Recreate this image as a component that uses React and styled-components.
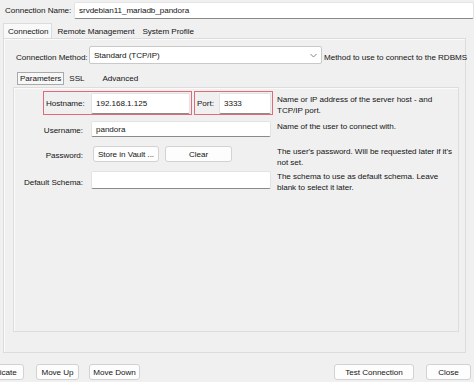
import React from "react";
import styled, { createGlobalStyle } from "styled-components";

const Global = createGlobalStyle`
  html, body {
    margin: 0;
    padding: 0;
    background: #f0f0f0;
  }
  * {
    box-sizing: border-box;
  }
`;

const Window = styled.div`
  width: 474px;
  height: 382px;
  overflow: hidden;
  background: #f0f0f0;
  color: #141414;
  font-family: "Liberation Sans", Arial, sans-serif;
  font-size: 8.1px;
  letter-spacing: -0.05px;
  display: flex;
  flex-direction: column;
`;

const NameRow = styled.div`
  display: flex;
  align-items: center;
  height: 18px;
  margin-top: 1px;
  padding-left: 5px;
`;

const NameLabel = styled.span`
  width: 69px;
  flex: none;
  white-space: nowrap;
`;

const TextInput = styled.div`
  background: #ffffff;
  height: ${({ $h }) => $h || 16}px;
  width: ${({ $w }) => ($w ? `${$w}px` : "auto")};
  flex: ${({ $grow }) => ($grow ? 1 : "none")};
  border: 1px solid #e3e3e3;
  border-bottom-color: #8a8a8a;
  border-radius: 2px;
  padding: 0 4px;
  display: flex;
  align-items: center;
  white-space: nowrap;
`;

const Tabs = styled.div`
  display: flex;
  margin: 4px 0 0 3px;
  height: 15px;
`;

const Tab = styled.div`
  padding: 0 3px 0 ${({ $active }) => ($active ? 4 : 2)}px;
  display: flex;
  align-items: center;
  white-space: nowrap;
  margin-right: ${({ $active }) => ($active ? 2 : 1)}px;
  background: ${({ $active }) => ($active ? "#f9f9f9" : "transparent")};
  border: 1px solid ${({ $active }) => ($active ? "#dcdcdc" : "transparent")};
  border-bottom: none;
`;

const Pane = styled.div`
  margin: 0 8px 0 3px;
  height: 315px;
  border: 1px solid #dcdcdc;
  box-shadow: inset 1px 1px 0 #fafafa;
  padding: 7px 6px 0 9px;
  display: flex;
  flex-direction: column;
`;

const MethodRow = styled.div`
  display: flex;
  align-items: center;
  height: 18px;
  padding-left: 3px;
`;

const MethodLabel = styled.span`
  width: 73px;
  flex: none;
  padding-top: 5px;
  white-space: nowrap;
`;

const Combo = styled.div`
  width: 233px;
  flex: none;
  height: 18px;
  background: #ffffff;
  border: 1px solid #c9c9c9;
  border-radius: 2px;
  padding: 0 4px;
  display: flex;
  align-items: center;
  justify-content: space-between;
`;

const Hint = styled.span`
  line-height: 11px;
  flex: none;
  white-space: nowrap;
  margin-left: 2px;
  padding-top: ${({ $top }) => $top || 0}px;
`;

const SubTabs = styled.div`
  display: flex;
  margin: 8px 0 0 4px;
  height: 13px;
`;

const SubTab = styled.div`
  padding: 0 2px;
  margin-right: ${({ $gap }) => $gap || 0}px;
  display: flex;
  align-items: center;
  border: 1px solid ${({ $active }) => ($active ? "#a9a9a9" : "transparent")};
  background: ${({ $active }) => ($active ? "#f7f7f7" : "transparent")};
`;

const InnerPane = styled.div`
  margin: 2px 0 20px 0;
  flex: 1;
  border: 1px solid #dddddd;
  box-shadow: inset 1px 1px 0 #fafafa;
  padding: 3px 0 0 1px;
  display: grid;
  grid-template-columns: 68px 180px 1fr;
  grid-template-rows: 24px 19px 19px 22px;
  column-gap: 8px;
  row-gap: 6px;
  align-content: start;
`;

const Label = styled.span`
  text-align: right;
  align-self: center;
  white-space: nowrap;
`;

const Field = styled.div`
  display: flex;
  align-items: flex-start;
  gap: 6px;
`;

const Desc = styled.span`
  line-height: 11px;
  padding-top: ${({ $top }) => $top || 0}px;
  margin-left: -2px;
  align-self: start;
  white-space: nowrap;
`;

const HostCell = styled.div`
  grid-column: 1 / 3;
  display: flex;
  justify-content: flex-end;
  gap: 2px;
  margin-right: -2px;
`;

const RedBox = styled.div`
  width: ${({ $w }) => $w}px;
  border: 1px solid #e06a7a;
  display: flex;
  align-items: center;
  padding: 0 1px 0 ${({ $pl }) => $pl}px;
  justify-content: space-between;
`;

const Button = styled.div`
  height: 16px;
  width: ${({ $w }) => $w}px;
  background: #fdfdfd;
  border: 1px solid #d2d2d2;
  border-radius: 3px;
  display: flex;
  align-items: center;
  justify-content: center;
  white-space: nowrap;
  flex: none;
  margin-left: ${({ $ml }) => $ml || 0}px;
  margin-right: ${({ $mr }) => $mr || 0}px;
`;

const BottomBar = styled.div`
  display: flex;
  align-items: center;
  margin-top: 11px;
  height: 16px;
`;

const Spacer = styled.div`
  flex: 1;
`;

const Chevron = () => (
  <svg width="7" height="5" viewBox="0 0 7 5">
    <path d="M0.5 1 L3.5 4 L6.5 1" fill="none" stroke="#7a7a7a" strokeWidth="0.9" />
  </svg>
);

export default function App() {
  return (
    <Window>
      <Global />
      <NameRow>
        <NameLabel>Connection Name:</NameLabel>
        <TextInput $grow $h={17}>srvdebian11_mariadb_pandora</TextInput>
      </NameRow>

      <Tabs>
        <Tab $active>Connection</Tab>
        <Tab>Remote Management</Tab>
        <Tab>System Profile</Tab>
      </Tabs>

      <Pane>
        <MethodRow>
          <MethodLabel>Connection Method:</MethodLabel>
          <Combo>
            <span>Standard (TCP/IP)</span>
            <Chevron />
          </Combo>
          <Hint $top={5}>Method to use to connect to the RDBMS</Hint>
        </MethodRow>

        <SubTabs>
          <SubTab $active $gap={2}>Parameters</SubTab>
          <SubTab $gap={12}>SSL</SubTab>
          <SubTab>Advanced</SubTab>
        </SubTabs>

        <InnerPane>
          <HostCell>
            <RedBox $w={149} $pl={2}>
              <span>Hostname:</span>
              <TextInput $w={99} $h={21}>192.168.1.125</TextInput>
            </RedBox>
            <RedBox $w={79} $pl={2}>
              <span>Port:</span>
              <TextInput $w={52} $h={21}>3333</TextInput>
            </RedBox>
          </HostCell>
          <Desc $top={3}>
            Name or IP address of the server host - and
            <br />
            TCP/IP port.
          </Desc>

          <Label>Username:</Label>
          <TextInput $h={16}>pandora</TextInput>
          <Desc $top={0}>Name of the user to connect with.</Desc>

          <Label>Password:</Label>
          <Field>
            <Button $w={66} $ml={2}>Store in Vault ...</Button>
            <Button $w={67}>Clear</Button>
          </Field>
          <Desc $top={0}>
            The user's password. Will be requested later if it's
            <br />
            not set.
          </Desc>

          <Label>Default Schema:</Label>
          <TextInput $h={18} />
          <Desc $top={0}>
            The schema to use as default schema. Leave
            <br />
            blank to select it later.
          </Desc>
        </InnerPane>
      </Pane>

      <BottomBar>
        <Button $w={48} $ml={-24}>Duplicate</Button>
        <Button $w={43} $ml={12}>Move Up</Button>
        <Button $w={51} $ml={10}>Move Down</Button>
        <Spacer />
        <Button $w={80}>Test Connection</Button>
        <Button $w={45} $ml={12} $mr={3}>Close</Button>
      </BottomBar>
    </Window>
  );
}
